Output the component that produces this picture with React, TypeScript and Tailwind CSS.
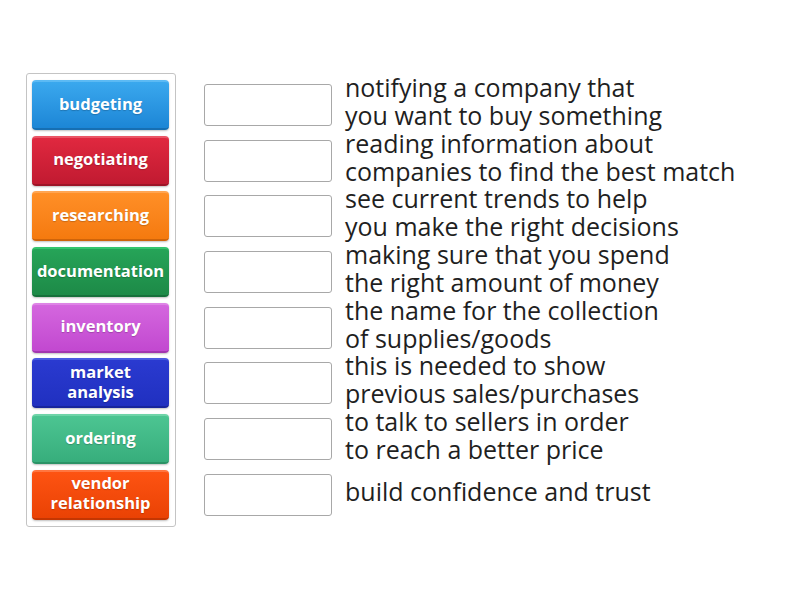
import React from "react";

const tiles: { label: string[]; cls: string }[] = [
  { label: ["budgeting"], cls: "bg-gradient-to-b from-[#3aa8ee] to-[#1c86d6] border-t-[#5cbaf4] border-b-[#166fb3]" },
  { label: ["negotiating"], cls: "bg-gradient-to-b from-[#e0283f] to-[#c11a31] border-t-[#ea5566] border-b-[#9d1427]" },
  { label: ["researching"], cls: "bg-gradient-to-b from-[#ff8f26] to-[#f57a0e] border-t-[#ffa552] border-b-[#cf640a]" },
  { label: ["documentation"], cls: "bg-gradient-to-b from-[#26a458] to-[#1d8a47] border-t-[#34c56c] border-b-[#16703a]" },
  { label: ["inventory"], cls: "bg-gradient-to-b from-[#d466de] to-[#c248d0] border-t-[#de84e6] border-b-[#a336b0]" },
  { label: ["market", "analysis"], cls: "bg-gradient-to-b from-[#2a3ad0] to-[#2030c0] border-t-[#4a5ae0] border-b-[#18259c]" },
  { label: ["ordering"], cls: "bg-gradient-to-b from-[#4cc592] to-[#37ae7c] border-t-[#6fd4a8] border-b-[#2b9366]" },
  { label: ["vendor", "relationship"], cls: "bg-gradient-to-b from-[#fd5312] to-[#ea4204] border-t-[#ff7640] border-b-[#c43602]" },
];

const defs: string[][] = [
  ["notifying a company that", "you want to buy something"],
  ["reading information about", "companies to find the best match"],
  ["see current trends to help", "you make the right decisions"],
  ["making sure that you spend", "the right amount of money"],
  ["the name for the collection", "of supplies/goods"],
  ["this is needed to show", "previous sales/purchases"],
  ["to talk to sellers in order", "to reach a better price"],
  ["build confidence and trust"],
];

export default function App() {
  return (
    <div
      className="w-[800px] h-[600px] bg-white relative overflow-hidden"
      style={{ fontFamily: '"Open Sans", "Noto Sans", sans-serif' }}
    >
      <div className="flex pt-[73px] pl-[26px]">
        <div className="w-[150px] h-[454px] border border-[#c4c4c4] rounded-[3px] pt-[6px] pl-[5px] pr-[6px] flex flex-col gap-[5.7px]">
          {tiles.map((t, i) => (
            <div
              key={i}
              className={`h-[50px] rounded-[4px] border-t-2 border-b-2 pb-[3px] flex flex-col items-center justify-center text-white font-bold text-[16.5px] leading-[20px] shadow-[0_1px_2px_rgba(0,0,0,0.25)] ${t.cls}`}
              style={{ textShadow: "0 1px 1px rgba(0,0,0,0.2)" }}
            >
              {t.label.map((l, j) => (
                <span key={j}>{l}</span>
              ))}
            </div>
          ))}
        </div>
        <div className="ml-[28px] pt-[7px] flex flex-col gap-[5.7px]">
          {defs.map((d, i) => (
            <div key={i} className="h-[50px] flex items-center">
              <div className="w-[128px] h-[42px] border border-[#a8a8a8] rounded-[3px] bg-white shrink-0" />
              <div className="ml-[13px] pb-[8px] text-[25px] leading-[28px] text-[#1f1f1f] whitespace-nowrap">
                {d.map((l, j) => (
                  <div key={j}>{l}</div>
                ))}
              </div>
            </div>
          ))}
        </div>
      </div>
    </div>
  );
}
